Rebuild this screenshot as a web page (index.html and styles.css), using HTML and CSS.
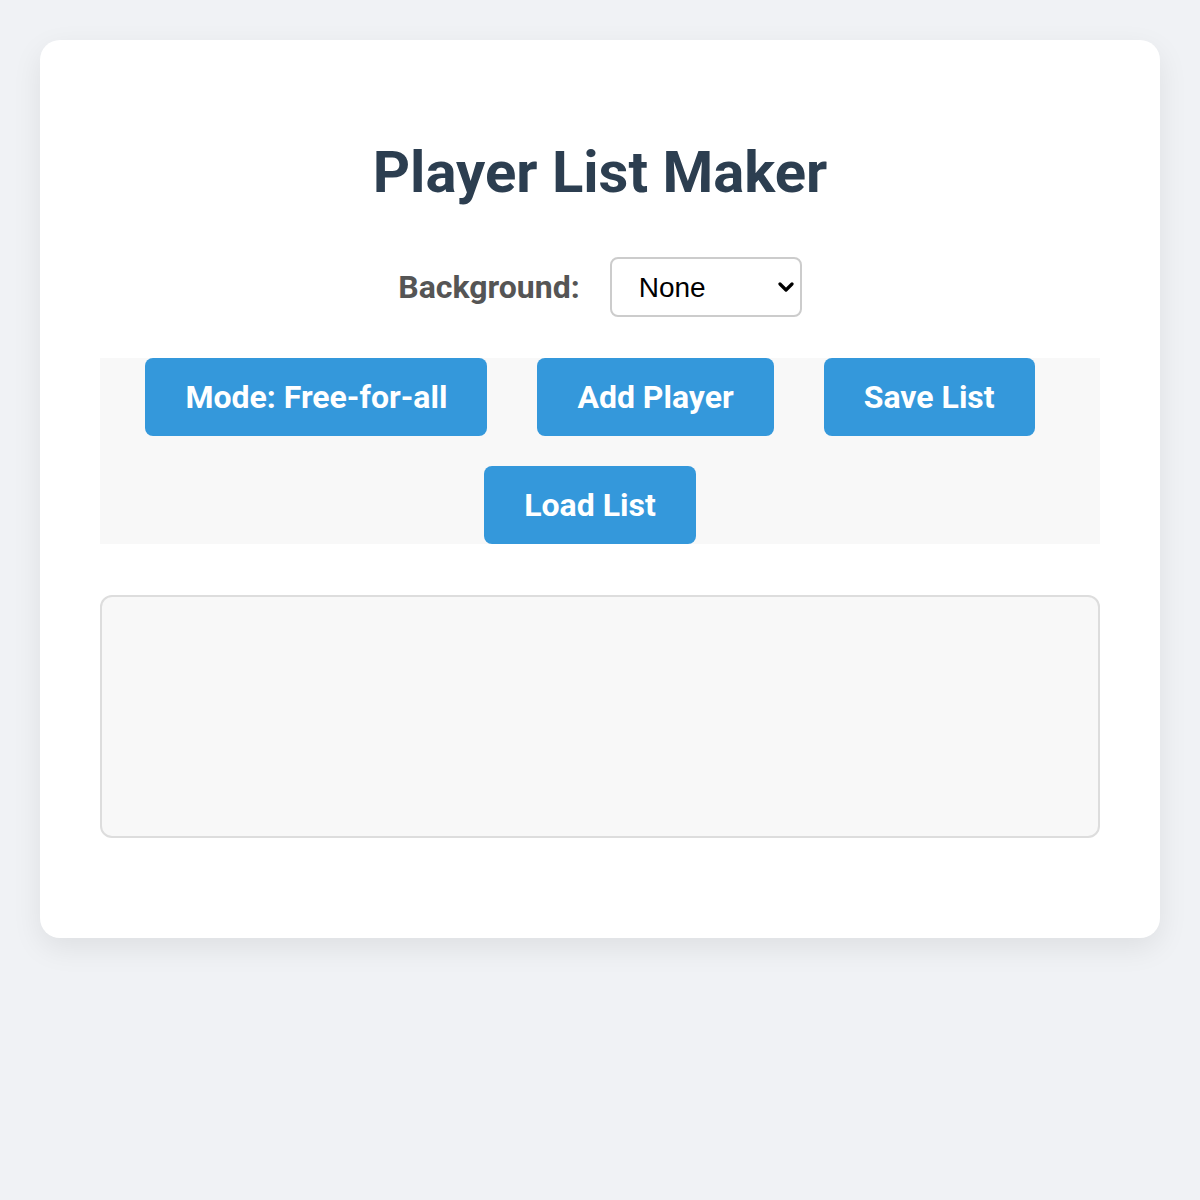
FILE: index.html
```html
<!DOCTYPE html>
<html lang="en">
<head>
<meta charset="utf-8">
<title>Player List Maker</title>
<link rel="stylesheet" href="styles.css">
</head>
<body>
  <main class="card">
    <h1 class="title">Player List Maker</h1>
    <div class="bg-row">
      <label class="bg-label" for="bg-select">Background:</label>
      <div class="select-wrap">
        <select id="bg-select" class="bg-select">
          <option>None</option>
          <option>Grass</option>
          <option>Stone</option>
        </select>
        <svg class="select-arrow" width="16" height="10" viewBox="0 0 16 10" aria-hidden="true">
          <path d="M2 2 L8 8 L14 2" fill="none" stroke="#000" stroke-width="3.2" stroke-linecap="round" stroke-linejoin="round"/>
        </svg>
      </div>
    </div>
    <div class="controls">
      <button class="btn">Mode: Free-for-all</button>
      <button class="btn">Add Player</button>
      <button class="btn">Save List</button>
      <button class="btn">Load List</button>
    </div>
    <div class="player-list"></div>
  </main>
</body>
</html>
```

FILE: styles.css
```css
html, body {
  margin: 0;
  padding: 0;
}

body {
  background: #f0f2f5;
  font-family: Roboto, "Liberation Sans", Arial, sans-serif;
  padding: 40px;
}

.card {
  background: #ffffff;
  border-radius: 20px;
  padding: 60px;
  box-shadow: 0 10px 30px rgba(0, 0, 0, 0.08);
}

.title {
  margin: 36px 0 49px;
  font-size: 58px;
  line-height: 72px;
  font-weight: 700;
  color: #2c3e50;
  text-align: center;
}

.bg-row {
  display: flex;
  justify-content: center;
  align-items: center;
  gap: 30px;
  margin-bottom: 41px;
}

.bg-label {
  font-size: 32px;
  font-weight: 700;
  color: #555555;
}

.select-wrap {
  position: relative;
  display: flex;
  height: 60px;
}

.bg-select {
  appearance: none;
  -webkit-appearance: none;
  width: 192px;
  height: 60px;
  box-sizing: border-box;
  padding: 0 40px 0 27px;
  font-family: "Liberation Sans", Arial, sans-serif;
  font-size: 28px;
  color: #000;
  background: #ffffff;
  border: 2px solid #cccccc;
  border-radius: 8px;
}

.select-arrow {
  position: absolute;
  right: 8px;
  top: 25px;
  pointer-events: none;
}

.controls {
  display: flex;
  flex-wrap: wrap;
  justify-content: center;
  gap: 30px;
  background: #f8f8f8;
}

.btn {
  height: 78px;
  padding: 0 40px;
  margin-right: 20px;
  border: none;
  border-radius: 8px;
  background: #3498db;
  color: #ffffff;
  font-family: Roboto, "Liberation Sans", Arial, sans-serif;
  font-size: 32px;
  font-weight: 700;
  cursor: pointer;
}

.player-list {
  margin: 51px 0 40px;
  height: 239px;
  background: #f8f8f8;
  border: 2px solid #dddddd;
  border-radius: 12px;
}
```
